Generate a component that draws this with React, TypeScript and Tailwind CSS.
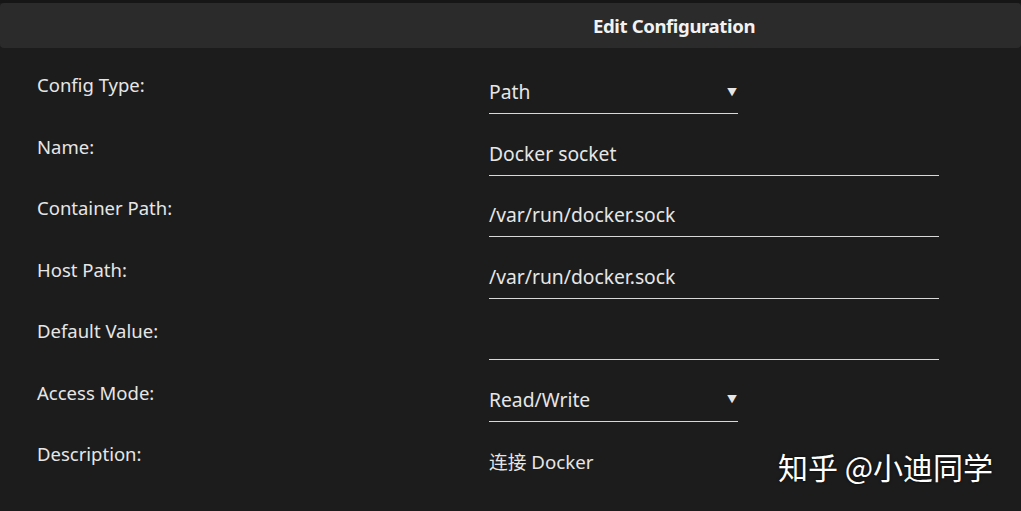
import React from "react";

type Row = {
  label: string;
  value: string;
  kind: "select" | "input" | "text";
};

const ROWS: Row[] = [
  { label: "Config Type:", value: "Path", kind: "select" },
  { label: "Name:", value: "Docker socket", kind: "input" },
  { label: "Container Path:", value: "/var/run/docker.sock", kind: "input" },
  { label: "Host Path:", value: "/var/run/docker.sock", kind: "input" },
  { label: "Default Value:", value: "", kind: "input" },
  { label: "Access Mode:", value: "Read/Write", kind: "select" },
  { label: "Description:", value: "连接 Docker", kind: "text" },
];

const FONT = "font-['Noto_Sans','Noto_Sans_CJK_SC',sans-serif]";

const Field: React.FC<{ row: Row }> = ({ row }) => {
  if (row.kind === "text") {
    return <div className="mt-[28px] text-[18.7px] leading-6 text-[#e6e6e6]">{row.value}</div>;
  }
  const width = row.kind === "select" ? "w-[249px]" : "w-[450px]";
  return (
    <div className={`${width} h-[61.5px] flex items-end`}>
      <div className="w-full flex items-center justify-between border-b border-[#d8d8d8] pb-[7px] h-[36px]">
        <span className="text-[19.3px] leading-6 text-[#e6e6e6]">{row.value}</span>
        {row.kind === "select" && <span className="text-[10px] text-[#e6e6e6] mr-[1px]">▼</span>}
      </div>
    </div>
  );
};

export default function App() {
  return (
    <div className={`w-[1021px] h-[511px] bg-[#1c1c1c] overflow-hidden relative ${FONT}`}>
      <div className="h-[3px] bg-[#161616]" />
      <div className="h-[45px] bg-[#2b2b2b] rounded-[4px] flex items-center pl-[593px]">
        <span className="text-[18.6px] font-bold text-[#f2f2f2] tracking-[-0.4px]">Edit Configuration</span>
      </div>
      <div className="pt-[4.5px]">
        {ROWS.map((row) => (
          <div key={row.label} className="flex h-[61.5px]">
            <div className="w-[489px] pl-[37px] pt-[20.5px] text-[18.5px] leading-6 text-[#e6e6e6]">{row.label}</div>
            <Field row={row} />
          </div>
        ))}
      </div>
      <div className="absolute left-[778px] top-[448px] text-[30px] leading-9 text-white font-['Noto_Sans_CJK_SC',sans-serif] [text-shadow:0_0_3px_rgba(0,0,0,0.8)]">
        知乎 @小迪同学
      </div>
    </div>
  );
}
